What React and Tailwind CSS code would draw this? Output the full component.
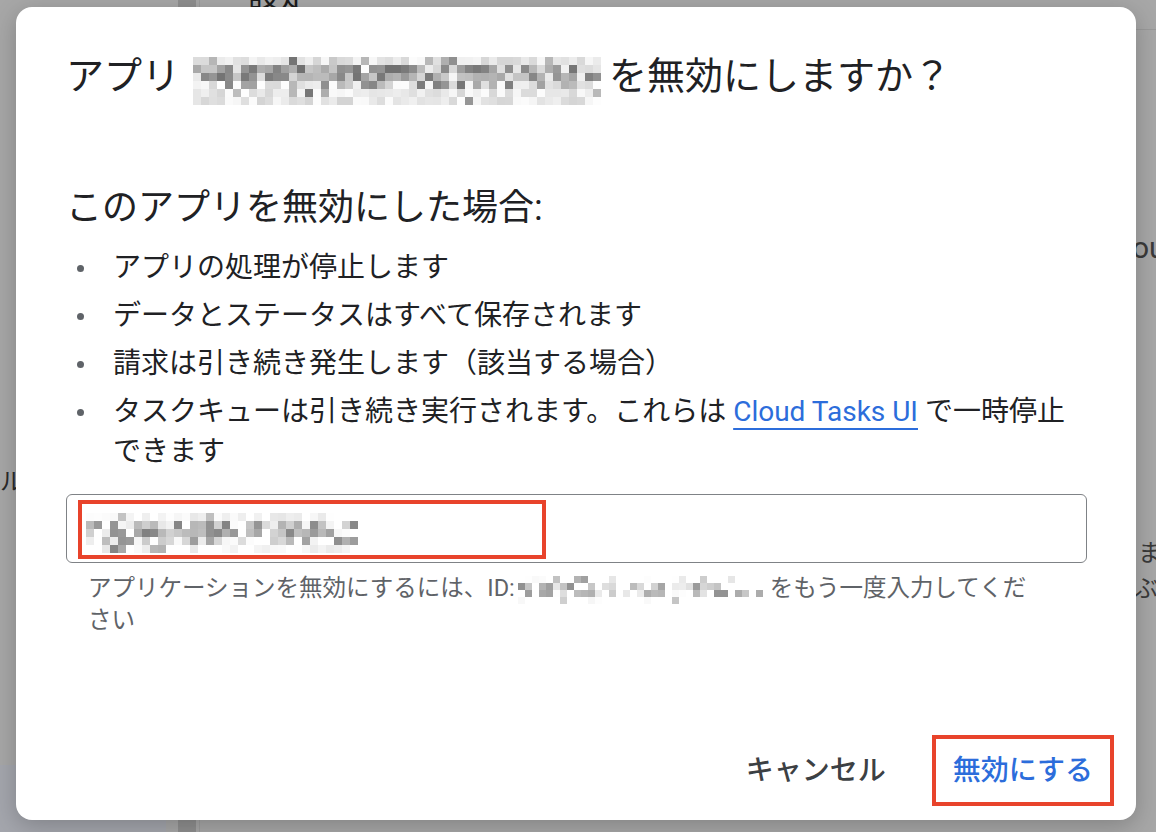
import React from "react";

// deterministic noise so the pixelated names look the same on every render
function makeRand(seed) {
  let a = seed >>> 0;
  return () => {
    a = (a + 0x6d2b79f5) >>> 0;
    let t = a;
    t = Math.imul(t ^ (t >>> 15), t | 1);
    t ^= t + Math.imul(t ^ (t >>> 7), t | 61);
    return ((t ^ (t >>> 14)) >>> 0) / 4294967296;
  };
}

const Mosaic = ({ cols, rows, cell, seed, profile, lift = 0, className = "" }) => {
  const rand = makeRand(seed);
  const rects = [];
  for (let r = 0; r < rows; r++) {
    for (let c = 0; c < cols; c++) {
      const ink = rand() < profile[r];
      let g = ink ? 110 + rand() * 95 : 212 + rand() * 43;
      g = Math.min(255, Math.round(g + lift));
      rects.push(
        <rect
          key={r + "-" + c}
          x={c * cell}
          y={r * cell}
          width={cell}
          height={cell}
          fill={`rgb(${g},${g},${g})`}
        />
      );
    }
  }
  return (
    <svg
      width={cols * cell}
      height={rows * cell}
      className={"inline-block shrink-0 " + className}
      shapeRendering="crispEdges"
    >
      {rects}
    </svg>
  );
};

const items = [
  "アプリの処理が停止します",
  "データとステータスはすべて保存されます",
  "請求は引き続き発生します（該当する場合）",
];

const Bullet = ({ children }) => (
  <li className="flex items-start">
    <span className="ml-[11px] mt-[17px] h-[7px] w-[7px] shrink-0 rounded-full bg-[#5f6368]" />
    <span className="ml-[29px]">{children}</span>
  </li>
);

const App = () => {
  return (
    <div className="relative h-[832px] w-full overflow-hidden bg-[#a7a7a7] font-['Roboto','Noto_Sans_CJK_JP',sans-serif]">
      {/* dimmed page behind the modal */}
      <div className="flex h-full">
        <aside className="flex w-[200px] shrink-0 border-r border-[#9c9c9c]">
          <div className="flex w-[166px] flex-col">
            <div className="flex-1 pt-[466px]">
              <div className="-ml-[48px] whitespace-nowrap text-[24px] leading-[32px] text-[#2a2a2a]">
                ツール
              </div>
            </div>
            <div className="h-[67px] bg-[#a4a6ad]" />
          </div>
          <div className="ml-[12px] h-full w-[18px] bg-[#8f8f8f]" />
        </aside>
        <main className="flex flex-1 flex-col">
          <div className="h-[30px] border-b border-[#999999] pl-[48px]">
            <div className="-mt-[24px] text-[32px] leading-[40px] text-[#1c1c1c]">
              設定
            </div>
          </div>
          <div className="flex flex-1 justify-end overflow-hidden">
            <div className="w-[24px] overflow-hidden whitespace-nowrap text-[#3a3a3a]">
              <div className="mt-[200px] text-[30px] leading-[36px]">ou</div>
              <div className="mt-[272px] pl-[6px] text-[24px] leading-[30px]">ま</div>
              <div className="mt-[6px] pl-[2px] text-[24px] leading-[30px]">ぶ発</div>
            </div>
          </div>
        </main>
      </div>

      {/* modal */}
      <div className="absolute left-[16px] top-[7px] flex h-[813px] w-[1120px] flex-col rounded-2xl bg-white pl-[50px] pr-[49px] pt-[45px] shadow-[0_6px_24px_rgba(0,0,0,0.22)]">
        <h2 className="flex h-[48px] items-center whitespace-nowrap text-[38px] leading-[48px] text-[#202124]">
          <span>アプリ</span>
          <Mosaic
            cols={51}
            rows={6}
            cell={8}
            seed={17}
            profile={[0.18, 0.7, 0.78, 0.55, 0.22, 0.04]}
            className="-mb-[5px] ml-[13px] mr-[8px] mt-[5px]"
          />
          <span>を無効にしますか？</span>
        </h2>

        <h3 className="mt-[86px] text-[36px] leading-[44px] text-[#202124]">
          このアプリを無効にした場合:
        </h3>

        <ul className="mt-[18px] flex flex-col gap-[8px] text-[28px] leading-[40px] text-[#202124]">
          {items.map((t) => (
            <Bullet key={t}>{t}</Bullet>
          ))}
          <Bullet>
            <span className="whitespace-nowrap">
              タスクキューは引き続き実行されます。これらは{" "}
              <a
                href="#"
                className="text-[#2c6ddb] underline decoration-2 underline-offset-[7px]"
              >
                Cloud Tasks UI
              </a>{" "}
              で一時停止
            </span>
            <br />
            できます
          </Bullet>
        </ul>

        <div className="mt-[22px] flex h-[69px] items-start rounded-md border-[1.5px] border-[#7f8286] pl-[11px] pt-[5px]">
          <div className="flex h-[59px] w-[468px] items-center border-4 border-[#e8432b] pl-[4px]">
            <Mosaic
              cols={34}
              rows={5}
              cell={8}
              seed={41}
              lift={18}
              profile={[0.15, 0.7, 0.75, 0.45, 0.08]}
              className="mt-[6px]"
            />
          </div>
        </div>

        <p className="mt-[9px] pl-[22px] text-[23.5px] leading-[32px] text-[#5f6368]">
          <span className="inline-flex items-center whitespace-nowrap">
            アプリケーションを無効にするには、ID:
            <Mosaic
              cols={35}
              rows={4}
              cell={7}
              seed={73}
              lift={34}
              profile={[0.15, 0.65, 0.6, 0.1]}
              className="ml-[3px] mr-[7px] mt-[4px]"
            />
            をもう一度入力してくだ
          </span>
          <br />
          さい
        </p>

        <div className="-mr-[27px] mt-[99px] flex items-center justify-end gap-[25px] text-[28px] font-medium leading-[40px]">
          <button className="flex h-[71px] items-center px-[21px] text-[#3c4043]">
            キャンセル
          </button>
          <button className="flex h-[71px] items-center border-4 border-[#e8432b] px-[17px] text-[#2c6ddb]">
            無効にする
          </button>
        </div>
      </div>
    </div>
  );
};

export default App;
